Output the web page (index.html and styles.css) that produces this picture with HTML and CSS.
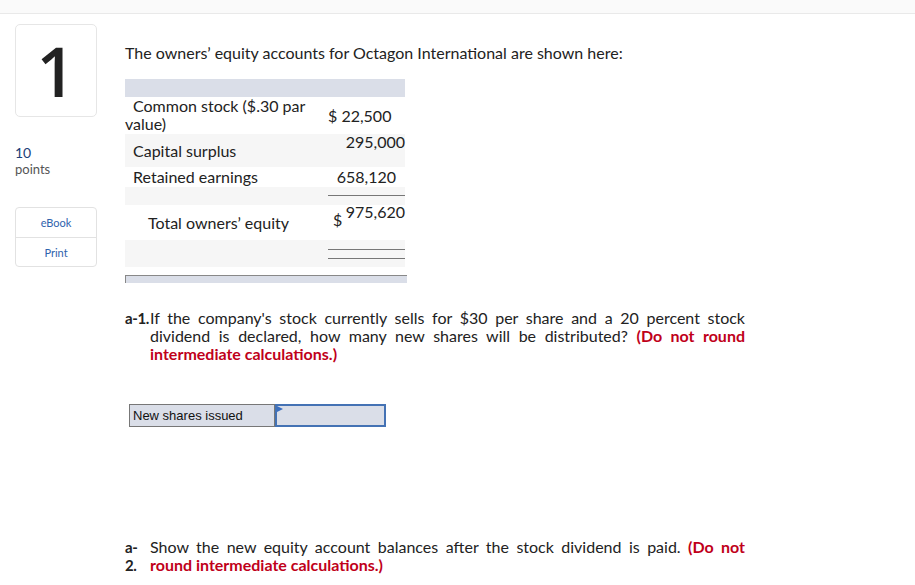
FILE: index.html
```html
<!DOCTYPE html>
<html lang="en">
<head>
<meta charset="utf-8">
<title>Question 1</title>
<link rel="stylesheet" href="styles.css">
</head>
<body>
<header class="topbar"></header>
<div class="page">
  <aside class="side">
    <div class="qnum">1</div>
    <div class="points">
      <div class="pts-num">10</div>
      <div class="pts-label">points</div>
    </div>
    <div class="tools">
      <a class="tool">eBook</a>
      <a class="tool">Print</a>
    </div>
  </aside>
  <main class="content">
    <p class="intro">The owners’ equity accounts for Octagon International are shown here:</p>
    <table class="equity">
      <colgroup><col class="c1"><col class="c2"></colgroup>
      <tr class="hdr"><td></td><td></td></tr>
      <tr class="r1"><td class="lbl ind">Common stock ($.30 par value)</td><td class="val mid">$ 22,500</td></tr>
      <tr class="r2 stripe"><td class="lbl pad">Capital surplus</td><td class="val top">295,000</td></tr>
      <tr class="r3"><td class="lbl pad">Retained earnings</td><td class="val right8">658,120</td></tr>
      <tr class="r4 stripe"><td></td><td><div class="rule"></div></td></tr>
      <tr class="r5"><td class="lbl pad2">Total owners’ equity</td><td><div class="total"><span class="dollar">$</span><span class="amt">975,620</span></div></td></tr>
      <tr class="r6 stripe"><td></td><td><div class="dbl"></div></td></tr>
    </table>
    <div class="table-foot"></div>

    <div class="question q1">
      <span class="qlabel nowrap">a-1.</span>
      <p class="qtext">If the company's stock currently sells for $30 per share and a 20 percent stock dividend is declared, how many new shares will be distributed? <strong class="warn">(Do not round intermediate calculations.)</strong></p>
    </div>

    <div class="answer">
      <div class="ans-label">New shares issued</div>
      <div class="ans-input"></div>
    </div>

    <div class="question q2">
      <span class="qlabel wrap">a-2.</span>
      <p class="qtext">Show the new equity account balances after the stock dividend is paid. <strong class="warn">(Do not round intermediate calculations.)</strong></p>
    </div>
  </main>
</div>
</body>
</html>
```
FILE: styles.css
```css
* { box-sizing: border-box; }
html, body { margin: 0; padding: 0; background: #fff; }
body {
  font-family: Lato, "Open Sans", sans-serif;
  color: #222;
  width: 915px;
  height: 585px;
  overflow: hidden;
}
.topbar {
  height: 14px;
  background: #fafafa;
  border-bottom: 1px solid #e9e9e9;
}
.page {
  display: flex;
  align-items: flex-start;
}
.side {
  width: 82px;
  margin-left: 15px;
  flex: none;
  display: flex;
  flex-direction: column;
}
.qnum {
  margin-top: 10px;
  height: 93px;
  border: 1px solid #e6e6e6;
  border-radius: 5px;
  display: flex;
  align-items: center;
  justify-content: center;
  font-family: "Open Sans", sans-serif;
  font-weight: 600;
  font-size: 68px;
  line-height: 1;
  color: #222;
}
.points {
  margin-top: 28px;
}
.pts-num {
  font-size: 14px;
  line-height: 16px;
  color: #1b3f78;
}
.pts-label {
  font-size: 13px;
  line-height: 16px;
  color: #555;
}
.tools {
  margin-top: 30px;
  border: 1px solid #e2e2e2;
  border-radius: 4px;
  display: flex;
  flex-direction: column;
}
.tool {
  height: 29px;
  display: flex;
  align-items: center;
  justify-content: center;
  font-size: 11px;
  color: #2f63ad;
}
.tool + .tool { border-top: 1px solid #e2e2e2; }

.content {
  margin-left: 28px;
  flex: 1;
  padding-right: 170px;
}
.intro {
  margin: 30px 0 0;
  font-size: 16px;
  line-height: 18px;
}
.equity {
  margin-top: 17px;
  width: 280px;
  table-layout: fixed;
  border-collapse: collapse;
  font-size: 16px;
  line-height: 18px;
}
.equity td { padding: 0; }
.c1 { width: 203px; }
.c2 { width: 77px; }
.hdr td { height: 18px; background: #dadee8; }
.r1 td { height: 37px; }
.r2 td { height: 33px; }
.r3 td { height: 20px; }
.r4 td { height: 18px; vertical-align: top; }
.r5 td { height: 35px; }
.r6 td { height: 27px; vertical-align: top; }
.stripe td { background: #f6f6f6; }
.lbl { vertical-align: middle; }
.ind { text-indent: 8px; vertical-align: top; }
.pad { padding-left: 8px !important; }
.pad2 { padding-left: 23px !important; }
.val.mid { vertical-align: middle; }
.val.top { vertical-align: top; text-align: right; line-height: 15px; }
.val.right8 { text-align: right; padding-right: 9px !important; }
.rule {
  margin-top: 8px;
  height: 1px;
  background: #777;
}
.total {
  display: flex;
  justify-content: space-between;
  align-items: flex-start;
  height: 35px;
  padding-left: 5px;
}
.dollar { margin-top: 6px; }
.amt { margin-top: -2px; }
.dbl {
  margin-top: 9px;
  height: 10px;
  border-top: 1px solid #777;
  border-bottom: 1px solid #777;
}
.table-foot {
  margin-top: 8px;
  width: 282px;
  height: 8px;
  background: #dadee8;
  border-top: 1px solid #888;
  border-left: 1px solid #888;
}

.question {
  display: flex;
  font-size: 16px;
  line-height: 18px;
}
.q1 { margin-top: 26px; }
.q2 { margin-top: 111px; }
.qlabel {
  width: 25px;
  flex: none;
  font-weight: 700;
  font-size: 15px;
  letter-spacing: -0.4px;
}
.qlabel.nowrap { white-space: nowrap; }
.qlabel.wrap { padding-right: 6px; }
.qtext {
  margin: 0;
  flex: 1;
  text-align: justify;
}
.warn {
  color: #c0001a;
  font-weight: 700;
}
.answer {
  margin-top: 41px;
  margin-left: 4px;
  display: flex;
  height: 23px;
}
.ans-label {
  width: 146px;
  border: 1px solid #777;
  background: #dadee8;
  font-family: "Liberation Sans", Arial, sans-serif;
  font-size: 13px;
  line-height: 21px;
  padding-left: 3px;
  color: #111;
}
.ans-input {
  position: relative;
  width: 111px;
  border: 2px solid #4472b4;
  background: #dadee8;
}
.ans-input::before {
  content: "";
  position: absolute;
  left: 0;
  top: 0;
  border-top: 3px solid transparent;
  border-bottom: 3px solid transparent;
  border-left: 6px solid #3a6fc0;
}
```
